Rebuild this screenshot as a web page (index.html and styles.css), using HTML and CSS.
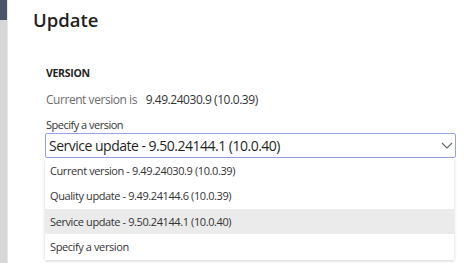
FILE: index.html
```html
<!DOCTYPE html>
<html lang="en">
<head>
  <meta charset="UTF-8">
  <title>Update</title>
  <meta name="viewport" content="width=device-width, initial-scale=1.0">
  <link rel="stylesheet" href="styles.css">
</head>
<body>
  <div class="update-page">
    <div class="update-side"><div class="update-side-top"></div></div>
    <div class="update-panel">
      <h2 class="update-title">Update</h2>

      <div class="update-section">
        <h3 class="update-section-title">VERSION</h3>
        <p class="update-current">
          <span class="update-current-label">Current version is</span>
          <span class="update-current-value">9.49.24030.9 (10.0.39)</span>
        </p>

        <label class="update-label" for="versionSelect">Specify a version</label>
        <div class="update-field">
          <div class="update-select" id="versionSelect">
            <span>Service update - 9.50.24144.1 (10.0.40)</span>
            <svg class="update-chevron" width="12" height="7" viewBox="0 0 12 7">
              <path d="M1 1l5 5 5-5" fill="none" stroke="#666" stroke-width="1.1"/>
            </svg>
          </div>
          <ul class="update-options">
            <li class="update-option">Current version - 9.49.24030.9 (10.0.39)</li>
            <li class="update-option">Quality update - 9.49.24144.6 (10.0.39)</li>
            <li class="update-option update-option-selected">Service update - 9.50.24144.1 (10.0.40)</li>
            <li class="update-option">Specify a version</li>
          </ul>
        </div>
      </div>
    </div>
  </div>
</body>
</html>
```

FILE: styles.css
```css
body {
  font-family: 'Open Sans', 'Noto Sans', sans-serif;
  background: #fff;
  margin: 0;
  padding: 0;
  color: #252525;
}
.update-page {
  display: flex;
  min-height: 263px;
}
.update-side {
  width: 7px;
  background: #d7d7d7;
  border-right: 1px solid #e6e6e6;
  flex-shrink: 0;
}
.update-side-top {
  height: 20px;
  background: #4b5468;
}
.update-panel {
  flex: 1;
  padding: 0 18px 0 25px;
}
.update-title {
  margin: 7px 0 0;
  font-size: 18.5px;
  line-height: 25px;
  font-weight: 600;
  color: #1f1f1f;
}
.update-section {
  padding: 34px 0 0 13px;
}
.update-section-title {
  margin: 0;
  font-size: 10.5px;
  line-height: 14px;
  font-weight: 700;
  color: #1f1f1f;
  letter-spacing: -0.3px;
}
.update-current {
  margin: 11.5px 0 0;
  font-size: 12px;
  line-height: 16px;
  letter-spacing: -0.45px;
}
.update-current-label {
  color: #6b6b6b;
  margin-right: 6px;
}
.update-current-value {
  color: #333;
}
.update-label {
  display: block;
  margin-top: 10px;
  font-size: 11px;
  line-height: 14px;
  letter-spacing: -0.5px;
  color: #333;
}
.update-field {
  position: relative;
  margin-top: 1px;
  margin-left: -1px;
}
.update-select {
  display: flex;
  align-items: center;
  justify-content: space-between;
  height: 23px;
  padding: 0 0 0 3px;
  border: 1px solid #9aa0e6;
  border-radius: 2px;
  font-size: 14px;
  letter-spacing: -0.5px;
  color: #1f1f1f;
}
.update-chevron {
  margin-right: 2px;
}
.update-options {
  position: absolute;
  top: 25px;
  left: 0;
  right: 2px;
  margin: 0;
  padding: 0;
  list-style: none;
  background: #fff;
  box-shadow: 0 1px 3px rgba(0,0,0,0.18);
}
.update-option {
  height: 25.5px;
  line-height: 25.5px;
  padding: 0 5px;
  font-size: 11px;
  letter-spacing: -0.4px;
  color: #333;
}
.update-option-selected {
  background: #ebebeb;
}
```
